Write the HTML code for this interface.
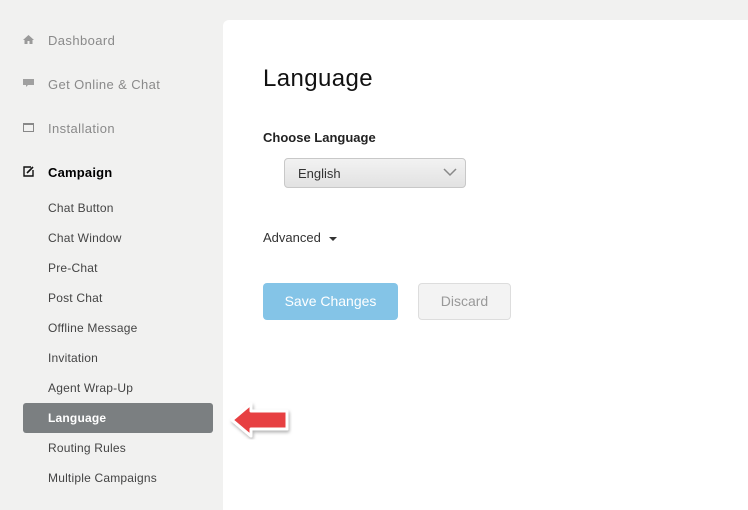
<!DOCTYPE html>
<html><head><style>
body{margin:0;width:748px;height:504px;background:#f1f1f0;font-family:"Liberation Sans","DejaVu Sans",sans-serif;position:relative;overflow:hidden}
.nav{position:absolute;left:48px;font-size:13px;color:#8a8a8a;letter-spacing:0.4px}
.ico{position:absolute;left:23px;width:11px;height:9px}
.sub{position:absolute;left:48px;font-size:12px;color:#444;letter-spacing:0.2px}
.main{position:absolute;left:223px;top:20px;width:530px;height:490px;background:#fff;border-top-left-radius:6px}
</style></head><body>
<svg class="ico" style="top:35px" viewBox="0 0 11 9"><path d="M5.5 0L0 5h1.5v4h3V6h2v3h3V5H11z" fill="#9a9a9a"/></svg>
<div class="nav" style="top:33px">Dashboard</div>
<svg class="ico" style="top:79px" viewBox="0 0 11 9"><path d="M0 0h11v6H5L3 8V6H0z" fill="#a0a0a0"/></svg>
<div class="nav" style="top:77px">Get Online &amp; Chat</div>
<svg class="ico" style="top:123px" viewBox="0 0 11 9"><rect x="0.5" y="0.5" width="10" height="8" fill="none" stroke="#888"/><rect x="0" y="0" width="11" height="2" fill="#888"/></svg>
<div class="nav" style="top:121px">Installation</div>
<svg class="ico" style="top:166px;height:11px" viewBox="0 0 11 11"><path d="M8 1H1v9h9V4" fill="none" stroke="#111" stroke-width="1.4"/><path d="M4 7l6-6" stroke="#111" stroke-width="1.6"/></svg>
<div class="nav" style="top:165px;color:#000;font-weight:bold;letter-spacing:0.2px">Campaign</div>
<div class="sub" style="top:201px">Chat Button</div>
<div class="sub" style="top:231px">Chat Window</div>
<div class="sub" style="top:261px">Pre-Chat</div>
<div class="sub" style="top:291px">Post Chat</div>
<div class="sub" style="top:321px">Offline Message</div>
<div class="sub" style="top:351px">Invitation</div>
<div class="sub" style="top:381px">Agent Wrap-Up</div>
<div style="position:absolute;left:23px;top:403px;width:190px;height:30px;background:#7b7f81;border-radius:3px"></div>
<div class="sub" style="top:411px;color:#fff;font-weight:bold">Language</div>
<div class="sub" style="top:441px">Routing Rules</div>
<div class="sub" style="top:471px">Multiple Campaigns</div>
<div class="main">
<div style="position:absolute;left:40px;top:45px;font-size:24px;color:#111;letter-spacing:0.4px">Language</div>
<div style="position:absolute;left:40px;top:110px;font-size:13px;font-weight:bold;color:#222">Choose Language</div>
<div style="position:absolute;left:61px;top:138px;width:180px;height:28px;border:1px solid #c8c8c8;border-radius:4px;background:linear-gradient(#f2f2f2,#e2e2e2)">
<span style="position:absolute;left:13px;top:7px;font-size:13px;color:#333">English</span>
<svg style="position:absolute;right:8px;top:9px" width="14" height="9" viewBox="0 0 14 9"><path d="M1 1l6 6 6-6" fill="none" stroke="#888" stroke-width="1.5"/></svg></div>
<div style="position:absolute;left:40px;top:210px;font-size:13px;color:#333">Advanced <span style="display:inline-block;margin-left:5px;border-left:4px solid transparent;border-right:4px solid transparent;border-top:4px solid #333;vertical-align:middle"></span></div>
<div style="position:absolute;left:40px;top:263px;width:135px;height:37px;background:#84c4e7;border-radius:4px;color:#fff;font-size:14px;text-align:center;line-height:37px">Save Changes</div>
<div style="position:absolute;left:195px;top:263px;width:91px;height:35px;background:#f3f3f3;border:1px solid #ddd;border-radius:4px;color:#999;font-size:14px;text-align:center;line-height:35px">Discard</div>
</div>
<svg style="position:absolute;left:226px;top:400px" width="70" height="42" viewBox="0 0 70 42">
<defs><filter id="s"><feDropShadow dx="1" dy="2" stdDeviation="1.5" flood-opacity="0.3"/></filter></defs>
<path d="M6 20L25 4v7h36v18H25v7z" fill="#e74042" stroke="#fff" stroke-width="3" stroke-linejoin="round" filter="url(#s)"/>
</svg>
</body></html>
